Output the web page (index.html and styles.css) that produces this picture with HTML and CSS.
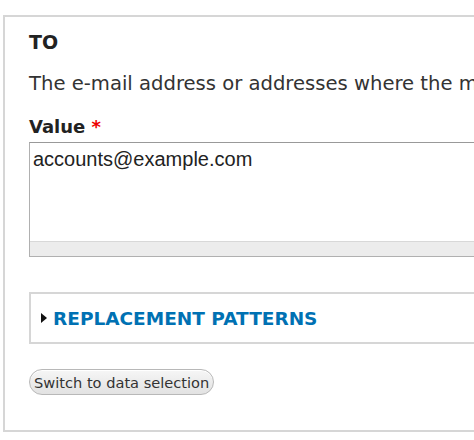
FILE: index.html
```html
<!DOCTYPE html>
<html>
<head>
<meta charset="utf-8">
<link rel="stylesheet" href="styles.css">
</head>
<body>
<div class="fieldset">
  <div class="legend">TO</div>
  <div class="desc">The e-mail address or addresses where the message will be sent to.</div>
  <div class="label">Value <span class="req">*</span></div>
  <div class="textarea">
    <div class="ta-body">accounts@example.com</div>
    <div class="ta-scroll"></div>
  </div>
  <div class="details">
    <span class="tri"></span><span class="summary">REPLACEMENT PATTERNS</span>
  </div>
  <div class="btn-row"><button class="btn">Switch to data selection</button></div>
</div>
</body>
</html>
```
FILE: styles.css
```css
html, body { margin: 0; padding: 0; overflow: hidden; background: #fff; }
body { width: 474px; height: 440px; font-family: "DejaVu Sans", sans-serif; color: #333; }
.fieldset {
  margin: 15px 0 0 3px;
  width: 600px;
  height: 417px;
  box-sizing: border-box;
  border: 2px solid #d6d6d6;
  border-right: none;
  padding: 14px 0 0 24px;
}
.legend { font-weight: bold; font-size: 19px; line-height: 22px; color: #222; }
.desc { margin-top: 20px; font-size: 19.6px; line-height: 22px; white-space: nowrap; }
.label { margin-top: 21px; font-weight: bold; font-size: 18px; line-height: 22px; color: #222; }
.req { color: #e00; }
.textarea {
  margin-top: 4px;
  width: 560px;
  border: 1px solid #b0b0b0;
  border-top-color: #999;
  box-sizing: border-box;
}
.ta-body {
  height: 98px;
  padding: 4px 0 0 3px;
  box-sizing: border-box;
  font-family: "Liberation Sans", Arial, sans-serif;
  font-size: 20px;
  line-height: 24px;
  color: #222;
}
.ta-scroll { height: 14px; background: #ececec; border-top: 1px solid #d8d8d8; }
.details {
  margin-top: 35px;
  width: 560px;
  height: 52px;
  box-sizing: border-box;
  border: 2px solid #d6d6d6;
  display: flex;
  align-items: center;
  padding-left: 10px;
}
.tri {
  width: 0; height: 0;
  border-top: 5px solid transparent;
  border-bottom: 5px solid transparent;
  border-left: 6px solid #111;
  margin-right: 6px;
}
.summary { color: #0071b3; font-weight: bold; font-size: 18.5px; }
.btn-row { margin-top: 25px; }
.btn {
  font-family: "DejaVu Sans", sans-serif;
  font-size: 14.6px;
  color: #333;
  height: 26px;
  padding: 0 4px;
  border: 1px solid #b8b8b8;
  border-radius: 13px;
  background: linear-gradient(#f6f6f6, #e2e2e2);
  box-shadow: inset 0 1px 0 #fff;
}
```
